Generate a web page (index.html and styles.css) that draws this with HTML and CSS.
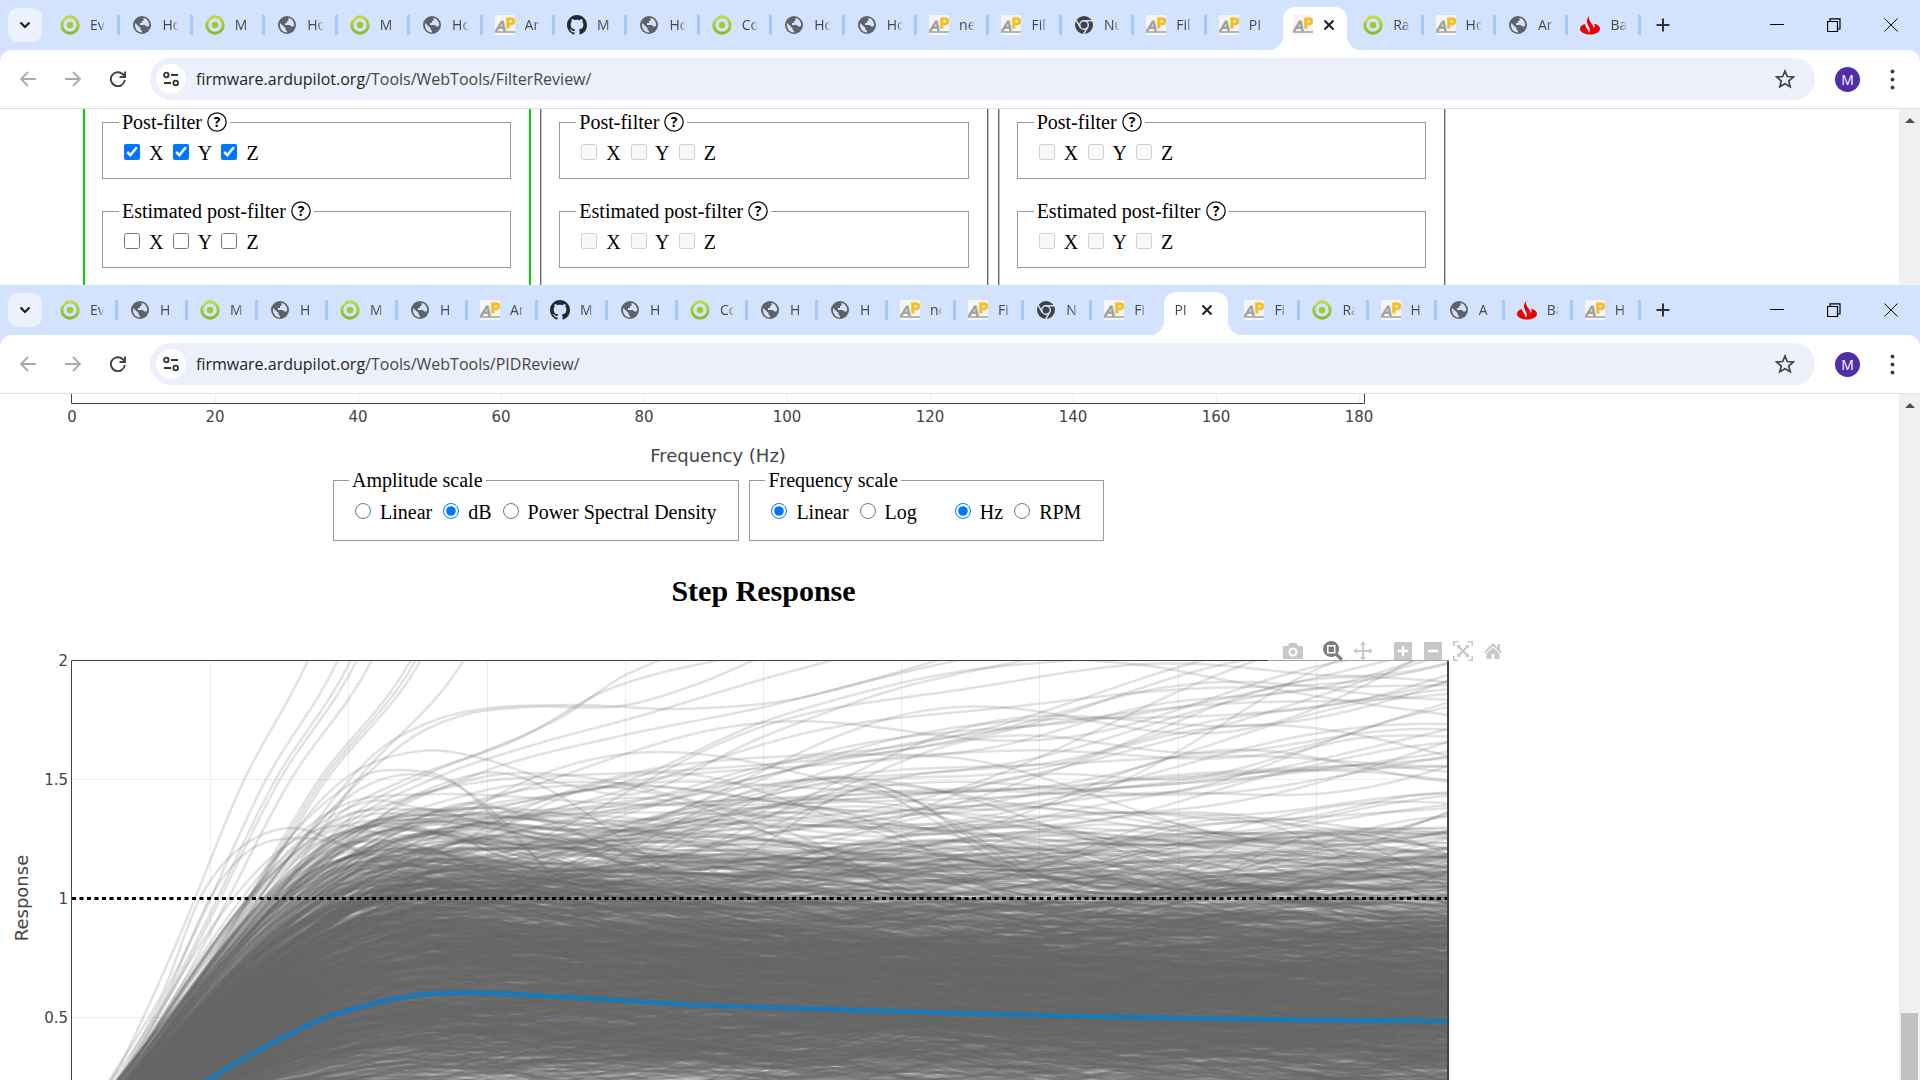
FILE: index.html
```html
<!DOCTYPE html>
<html lang="en">
<head>
  <meta charset="UTF-8" />
  <meta name="viewport" content="width=device-width, initial-scale=1.0"/>
  <title>PID Review</title>
  <link rel="stylesheet" href="styles.css">
</head>
<body>
  <!-- shared icons -->
  <svg class="sprite" aria-hidden="true">
    <defs>
      <linearGradient id="lime" x1="0" y1="0" x2="0" y2="1">
        <stop offset="0" stop-color="#c0d944"/><stop offset="1" stop-color="#86bc25"/>
      </linearGradient>
    </defs>
    <symbol id="ring" viewBox="0 0 20 20">
      <circle cx="10" cy="10" r="8.2" fill="none" stroke="url(#lime)" stroke-width="3"/>
      <circle cx="10" cy="10" r="3.2" fill="#9ecb2d"/>
      <path d="M2 6 A9 9 0 0 1 5 2.500" stroke="#d3e3fd" stroke-width="1" fill="none"/>
    </symbol>
    <symbol id="globe" viewBox="0 0 20 20">
      <circle cx="10" cy="10" r="9" fill="#5f6368"/>
      <path d="M3 8 L8.500 13 V14.500 L10 16 V17.500 C5.500 17.300 2.500 14 3 8 Z M11.500 3 C15 3.500 17 6.500 17.200 10 C16.500 12 15.500 11.500 14.500 11.500 C13.500 11.500 13.800 10 12.500 10 H8 V8 H10 V6 H11.500 Z" fill="#d3e3fd"/>
    </symbol>
    <symbol id="github" viewBox="0 0 16 16">
      <path fill="#24292f" d="M8 0C3.580 0 0 3.580 0 8c0 3.540 2.290 6.530 5.470 7.590.4.070.55-.17.55-.38 0-.19-.01-.82-.01-1.490-2.010.37-2.530-.49-2.690-.94-.09-.23-.48-.94-.82-1.130-.28-.15-.68-.52-.01-.53.63-.01 1.080.58 1.230.82.72 1.210 1.870.87 2.330.66.07-.52.28-.87.51-1.070-1.780-.2-3.640-.89-3.640-3.950 0-.87.31-1.590.82-2.150-.08-.2-.36-1.020.08-2.120 0 0 .67-.21 2.200.82.64-.18 1.320-.27 2-.27s1.360.09 2 .27c1.530-1.040 2.200-.82 2.200-.82.44 1.100.16 1.920.08 2.120.51.56.82 1.270.82 2.150 0 3.070-1.870 3.750-3.650 3.950.29.25.54.73.54 1.480 0 1.070-.01 1.930-.01 2.200 0 .21.15.46.55.38A8.010 8.010 0 0 0 16 8c0-4.420-3.580-8-8-8z"/>
    </symbol>
    <symbol id="chrome" viewBox="0 0 20 20">
      <circle cx="10" cy="10" r="9" fill="#3f4247"/>
      <circle cx="10" cy="10" r="4.300" fill="#3f4247" stroke="#d3e3fd" stroke-width="1.500"/>
      <path d="M10 5.700 H18 M6.200 12.200 L2.200 5.300 M13.700 12.200 L9.700 19" stroke="#d3e3fd" stroke-width="1.500"/>
    </symbol>
    <symbol id="flame" viewBox="0 0 20 20">
      <path fill="#ec0000" d="M10 0 C8 3 9 5 11.500 8.500 C13 10.500 13.800 11.500 13.500 13.500 C15 11.800 15 9.800 14 8.500 C18 9.500 20 11.500 20 14 C20 17 15.500 19.500 10 19.500 S0 17 0 14 C0 11.500 2 9.800 5 9 C5 11 6 12 7.500 14.500 C8.300 15.800 9 17 8.800 18 C10.500 15.500 10 13.500 8.500 11 C6.500 8 6 4 10 0 Z"/>
    </symbol>
    <symbol id="close" viewBox="0 0 12 12">
      <path d="M1.500 1.500 L10.500 10.500 M10.500 1.500 L1.500 10.500" stroke="#1f1f1f" stroke-width="2"/>
    </symbol>
  </svg>

  <div class="window" data-window="filter" data-url="/Tools/WebTools/FilterReview/">
    <div class="page filter-page">
      <main class="gyros" id="gyros"></main>
      <div class="scrollbar"><span class="arrow-up"></span></div>
    </div>
  </div>

  <div class="window grow" data-window="pid" data-url="/Tools/WebTools/PIDReview/">
    <div class="page pid-page">
      <main class="review">
        <svg class="spectrum" id="spectrum" role="img" aria-label="Frequency spectrum"></svg>
        <div class="scales">
          <fieldset class="scale">
            <legend>Amplitude scale</legend>
            <input type="radio" id="amp-linear" name="amp">
            <label for="amp-linear">Linear</label>
            <input type="radio" id="amp-db" name="amp" checked>
            <label for="amp-db">dB</label>
            <input type="radio" id="amp-psd" name="amp">
            <label for="amp-psd">Power Spectral Density</label>
          </fieldset>
          <fieldset class="scale">
            <legend>Frequency scale</legend>
            <input type="radio" id="freq-linear" name="freq" checked>
            <label for="freq-linear">Linear</label>
            <input type="radio" id="freq-log" name="freq">
            <label for="freq-log" class="group-end">Log</label>
            <input type="radio" id="unit-hz" name="unit" checked>
            <label for="unit-hz">Hz</label>
            <input type="radio" id="unit-rpm" name="unit">
            <label for="unit-rpm">RPM</label>
          </fieldset>
        </div>
        <h2>Step Response</h2>
        <div class="chart">
          <svg class="step" id="step" role="img" aria-label="Step response"></svg>
          <div class="modebar">
            <button title="Download plot as a png"><svg viewBox="0 0 20 20"><path fill-rule="evenodd" d="M1 5 H5 L6.500 2 H13.500 L15 5 H19 Q20 5 20 6 V17 Q20 18 19 18 H1 Q0 18 0 17 V6 Q0 5 1 5 Z M10 6.500 A4.500 4.500 0 1 0 10.010 6.500 Z M10 8.500 A2.500 2.500 0 1 1 9.990 8.500 Z"/></svg></button>
            <button title="Zoom" class="active gap"><svg viewBox="0 0 20 20"><path fill-rule="evenodd" d="M8 0 A8 8 0 1 0 12.500 14.700 L17.500 20 L20 17.500 L14.700 12.500 A8 8 0 0 0 8 0 Z M4 4 H12.500 V12.500 H4 Z M5.500 5.500 V11 H11 V5.500 Z"/></svg></button>
            <button title="Pan"><svg viewBox="0 0 20 20"><path d="M10 0 L13 4 H11 V9 H16 V7 L20 10 L16 13 V11 H11 V16 H13 L10 20 L7 16 H9 V11 H4 V13 L0 10 L4 7 V9 H9 V4 H7 Z"/></svg></button>
            <button title="Zoom in" class="gap"><svg viewBox="0 0 20 20"><path fill-rule="evenodd" d="M1 1 H19 V19 H1 Z M8.800 5 V8.800 H5 V11.200 H8.800 V15 H11.200 V11.200 H15 V8.800 H11.200 V5 Z"/></svg></button>
            <button title="Zoom out"><svg viewBox="0 0 20 20"><path fill-rule="evenodd" d="M1 1 H19 V19 H1 Z M5 8.800 V11.200 H15 V8.800 Z"/></svg></button>
            <button title="Autoscale"><svg viewBox="0 0 20 20"><path d="M0 0 H5 V1.500 H1.500 V5 H0 Z M15 0 H20 V5 H18.500 V1.500 H15 Z M0 15 H1.500 V18.500 H5 V20 H0 Z M18.500 15 H20 V20 H15 V18.500 H18.500 Z M4 4 H8 L6.800 5.300 L10 8.500 L13.200 5.300 L12 4 H16 V8 L14.700 6.800 L11.500 10 L14.700 13.200 L16 12 V16 H12 L13.200 14.700 L10 11.500 L6.800 14.700 L8 16 H4 V12 L5.300 13.200 L8.500 10 L5.300 6.800 L4 8 Z"/></svg></button>
            <button title="Reset axes"><svg viewBox="0 0 20 20"><path d="M10 2 L14.500 6.500 V3 H17 V9 L19 11 L17.500 12 L10 5 L2.500 12 L1 11 Z M3.500 12.500 L10 6.500 L16.500 12.500 V18 H11.500 V13 H8.500 V18 H3.500 Z"/></svg></button>
          </div>
        </div>
      </main>
      <div class="scrollbar"><span class="arrow-up"></span><span class="thumb"></span></div>
    </div>
  </div>

  <script src="script.js"></script>
</body>
</html>
```

FILE: styles.css
```css
* {
  box-sizing: border-box;
}

body {
  margin: 0;
  height: 100vh;
  display: flex;
  flex-direction: column;
  overflow: hidden;
  background: #fff;
  color: #000;
  font-family: "Liberation Serif", "Times New Roman", serif;
  font-size: 20px;
}

button {
  border: none;
  padding: 0;
  background: none;
  display: flex;
  align-items: center;
  justify-content: center;
  font-family: inherit;
}

.sprite {
  position: absolute;
  width: 0;
  height: 0;
}

.ap-mark {
  font: italic 15px "Liberation Sans", Arial, sans-serif;
  fill: #a0a0a0;
  stroke: #a0a0a0;
  stroke-width: 1px;
}

.ap-mark tspan {
  font: bold 14px "Liberation Sans", Arial, sans-serif;
  fill: #f8bd1c;
  stroke: #f8bd1c;
}

.help-mark {
  font: bold 14px "Open Sans", sans-serif;
}

.window {
  display: flex;
  flex-direction: column;
}

.grow {
  flex: 1;
  min-height: 0;
}

/* tab strip */
.tabstrip {
  display: flex;
  height: 50px;
  background: #d3e3fd;
  font-family: "Open Sans", "Segoe UI", sans-serif;
}

.tab-search {
  width: 34px;
  height: 34px;
  margin: 8px 6px 8px 8px;
  border-radius: 10px;
  background: #ebf1fd;
}

.tab-search svg {
  width: 12px;
  height: 12px;
}

.tabs {
  flex: 1;
  display: flex;
  min-width: 0;
}

.tab {
  flex: 1 1 0;
  min-width: 0;
  height: 50px;
  display: flex;
  align-items: center;
  justify-content: flex-start;
  padding: 0 14px 0 12px;
  gap: 10px;
  background: linear-gradient(#a8c7fa, #a8c7fa) right center / 3px 20px no-repeat;
}

.tab.wide {
  flex: 0 0 70px;
}

.tab.no-line {
  background: none;
}

.tab svg {
  flex: none;
  width: 20px;
  height: 20px;
}

.tab span {
  flex: 1;
  min-width: 0;
  overflow: hidden;
  white-space: nowrap;
  text-align: left;
  font-size: 14px;
  line-height: 20px;
  color: #474747;
  mask-image: linear-gradient(to right, #000 60%, transparent);
}

.tab.active {
  flex: 0 0 64px;
  position: relative;
  height: 43px;
  margin: 7px 4px 0;
  padding: 0 15px 7px 10px;
  background: #fff;
  border-radius: 12px 12px 0 0;
}

.tab.active::before,
.tab.active::after {
  content: "";
  position: absolute;
  bottom: 0;
  width: 14px;
  height: 14px;
}

.tab.active::before {
  left: -14px;
  background: radial-gradient(circle at 0 0, transparent 14px, #fff 14px);
}

.tab.active::after {
  right: -14px;
  background: radial-gradient(circle at 100% 0, transparent 14px, #fff 14px);
}

.tab .close {
  flex: none;
}

.tab .close svg {
  width: 12px;
  height: 12px;
}

.new-tab {
  width: 44px;
}

.new-tab svg {
  width: 14px;
  height: 14px;
}

.window-buttons {
  display: flex;
  margin-left: 63px;
  margin-right: 1px;
}

.window-buttons button {
  width: 57px;
}

.window-buttons svg {
  width: 14px;
  height: 14px;
}

/* address bar */
.toolbar-back {
  background: #d3e3fd;
}

.toolbar {
  display: flex;
  align-items: center;
  height: 59px;
  padding: 0 6px 0 5px;
  background: #fff;
  border-bottom: 1px solid #dfdfdf;
  border-radius: 12px 12px 0 0;
  font-family: "Open Sans", "Segoe UI", sans-serif;
}

.toolbar .nav {
  width: 45px;
  height: 45px;
}

.nav svg {
  width: 16px;
  height: 16px;
}

.omnibox {
  flex: 1;
  display: flex;
  align-items: center;
  height: 42px;
  margin-left: 10px;
  padding: 0 20px 0 6px;
  background: #ebf0fa;
  border-radius: 21px;
}

.site-info {
  width: 30px;
  height: 30px;
  margin-right: 10px;
  border-radius: 50%;
  background: #fff;
}

.site-info svg {
  width: 16px;
  height: 16px;
}

.url {
  flex: 1;
  font-size: 16px;
  line-height: 24px;
  color: #474747;
}

.url b {
  font-weight: normal;
  color: #1f1f1f;
}

.bookmark svg {
  width: 20px;
  height: 20px;
}

.avatar {
  width: 25px;
  height: 25px;
  margin-left: 20px;
  border-radius: 50%;
  background: #512da8;
  color: #fff;
  font-size: 14px;
}

.menu {
  width: 44px;
  height: 40px;
  margin-left: 10px;
}

.menu svg {
  width: 5px;
  height: 21px;
}

/* pages */
.page {
  display: flex;
  overflow: hidden;
}

.filter-page {
  height: 176px;
}

.pid-page {
  flex: 1;
  min-height: 0;
}

.scrollbar {
  width: 21px;
  background: #f0f0f0;
  display: flex;
  flex-direction: column;
  align-items: center;
  justify-content: space-between;
  padding-top: 9px;
}

.arrow-up {
  border: 5px solid transparent;
  border-top: none;
  border-bottom-color: #505050;
}

.thumb {
  width: 17px;
  height: 67px;
  background: #c1c1c1;
}

fieldset {
  margin: 0;
  min-width: 0;
  border: 1px solid #999;
}

legend {
  padding: 0 3px;
}

input {
  width: 16px;
  height: 16px;
}

.gyros {
  flex: 1;
  display: flex;
  gap: 9px;
  padding: 0 453px 0 83px;
}

.gyro {
  flex: 1;
  padding: 1px 18px 0 17px;
  border: 2px groove #c0c0c0;
  border-width: 0 2px;
}

.gyro.on {
  border-style: solid;
  border-color: #00d400;
}

.axes {
  height: 69px;
  margin-bottom: 20px;
  padding: 6px 16px 0;
}

.axes input {
  margin: 4px 4px 4px 5px;
}

.axes legend {
  display: flex;
  align-items: center;
  gap: 5px;
  height: 24px;
}

.axes legend svg {
  width: 20px;
  height: 20px;
}

.review {
  flex: 1;
  min-width: 0;
}

.spectrum {
  display: block;
  width: 100%;
  height: 75px;
}

.scales {
  display: flex;
  gap: 10px;
  padding-left: 333px;
}

.scale {
  padding: 7px 22px 16px 15px;
}

.scale input {
  margin: 4px 4px 4px 6px;
}

.scale legend {
  height: 23px;
}

.group-end {
  margin-right: 27px;
}

h2 {
  width: 1527px;
  margin: 33px 0 0;
  font-size: 30px;
  line-height: 34px;
  text-align: center;
}

.chart {
  position: relative;
}

.step {
  display: block;
  width: 100%;
  height: 480px;
}

.tick {
  font: 15px "DejaVu Sans", Verdana, sans-serif;
  fill: #444;
}

.axis-title {
  font: 18px "DejaVu Sans", Verdana, sans-serif;
  fill: #444;
}

.axis-line {
  fill: none;
  stroke: #444;
}

.grid {
  stroke: #eee;
  stroke-width: 1px;
}

.trace {
  fill: none;
  stroke: #6a6a6a;
  stroke-opacity: 0.2;
  stroke-width: 2.5px;
}

.mean {
  fill: none;
  stroke: #1f77b4;
  stroke-width: 5px;
}

.target {
  stroke: #000;
  stroke-width: 3px;
  stroke-dasharray: 4 3.5;
}

.modebar {
  position: absolute;
  top: 31px;
  left: 1268px;
  display: flex;
  padding: 2px 0 0 10px;
  background: rgba(255, 255, 255, 0.5);
}

.modebar button {
  width: 30px;
  height: 20px;
}

.modebar .gap {
  margin-left: 10px;
}

.modebar svg {
  width: 20px;
  height: 20px;
  fill: #c8c8c8;
}

.modebar .active svg {
  fill: #7c7c7c;
}
```

FILE: script.js
```javascript
// Browser chrome
const tabSets = {
  filter: {
    wide: 0,
    tabs: [
      ["ring", "Ev"], ["globe", "Ho"], ["ring", "M"], ["globe", "Ho"], ["ring", "M"], ["globe", "Ho"],
      ["ap", "Ar"], ["github", "M"], ["globe", "Ho"], ["ring", "Co"], ["globe", "Ho"], ["globe", "Ho"],
      ["ap", "ne"], ["ap", "Fil"], ["chrome", "Nu"], ["ap", "Fil"], ["ap", "PI"], ["ap", "", "active"],
      ["ring", "Ra"], ["ap", "Ho"], ["globe", "Ar"], ["flame", "Ba"]
    ]
  },
  pid: {
    wide: 12,
    tabs: [
      ["ring", "Ev"], ["globe", "H"], ["ring", "M"], ["globe", "H"], ["ring", "M"], ["globe", "H"],
      ["ap", "Ar"], ["github", "M"], ["globe", "H"], ["ring", "Co"], ["globe", "H"], ["globe", "H"],
      ["ap", "ne"], ["ap", "Fi"], ["chrome", "N"], ["ap", "Fi"], ["", "PI", "active"], ["ap", "Fi"],
      ["ring", "Ra"], ["ap", "H"], ["globe", "A"], ["flame", "Ba"], ["ap", "H"]
    ]
  }
};

const apIcon = `<svg viewBox="0 0 20 20"><rect width="20" height="20" fill="#f5f5f5"/>
  <rect y="16" width="20" height="2" fill="#b5b5b5"/><text x="1" y="16" class="ap-mark">A<tspan y="13">P</tspan></text></svg>`;
const helpIcon = `<svg viewBox="0 0 20 20"><circle cx="10" cy="10" r="9.2" fill="none" stroke="#111" stroke-width="1.3"/>
  <text x="10" y="15" text-anchor="middle" class="help-mark">?</text></svg>`;
const use = id => id === "ap" ? apIcon : `<svg><use href="#${id}"/></svg>`;

function renderTab(tab, i, set) {
  const [icon, text, active] = tab;
  const body = (icon ? use(icon) : "") + (text ? `<span>${text}</span>` : "");
  if (active) {
    return `<div class="tab active">${body}<button class="close" title="Close">${use("close")}</button></div>`;
  }
  const next = set.tabs[i + 1];
  const cls = (i < set.wide ? " wide" : "") + (next && next[2] ? " no-line" : "");
  return `<button class="tab${cls}">${body}</button>`;
}

function renderChrome(win) {
  const set = tabSets[win.dataset.window];
  win.insertAdjacentHTML("afterbegin", `
    <div class="tabstrip">
      <button class="tab-search" title="Search tabs"><svg viewBox="0 0 12 12"><path d="M1.5 3.5 L6 8 L10.5 3.5" fill="none" stroke="#1f1f1f" stroke-width="2.2"/></svg></button>
      <div class="tabs">${set.tabs.map((t, i) => renderTab(t, i, set)).join("")}</div>
      <button class="new-tab" title="New tab"><svg viewBox="0 0 14 14"><path d="M7 0.500 V13.500 M0.500 7 H13.500" stroke="#333" stroke-width="2"/></svg></button>
      <div class="window-buttons">
        <button title="Minimize"><svg viewBox="0 0 14 14"><path d="M0 6.500 H14" stroke="#000"/></svg></button>
        <button title="Restore"><svg viewBox="0 0 14 14"><path d="M0.500 3.500 H10.500 V13.500 H0.500 Z M3 3 V0.800 H13 V11 H11" fill="none" stroke="#000" stroke-width="1.2"/></svg></button>
        <button title="Close"><svg viewBox="0 0 14 14"><path d="M0.500 0.500 L13.500 13.500 M13.500 0.500 L0.500 13.500" stroke="#000"/></svg></button>
      </div>
    </div>
    <div class="toolbar-back">
      <div class="toolbar">
        <button class="nav" title="Back"><svg viewBox="0 0 16 16"><path d="M16 8 H1.500 M8 1 L1 8 L8 15" fill="none" stroke="#aaa" stroke-width="1.800"/></svg></button>
        <button class="nav" title="Forward"><svg viewBox="0 0 16 16"><path d="M0 8 H14.500 M8 1 L15 8 L8 15" fill="none" stroke="#aaa" stroke-width="1.800"/></svg></button>
        <button class="nav" title="Reload"><svg viewBox="0 0 16 16"><path d="M14.800 9 A7 7 0 1 1 12.800 3.200 L14.500 5 M15 0.500 V6 H9.500" fill="none" stroke="#444" stroke-width="2"/></svg></button>
        <div class="omnibox">
          <button class="site-info" title="Site information"><svg viewBox="0 0 16 16"><path d="M8 4 H15 M1 12 H8" stroke="#333" stroke-width="2"/><circle cx="3.300" cy="4" r="2.300" fill="none" stroke="#333" stroke-width="1.800"/><circle cx="12.700" cy="12" r="2.300" fill="none" stroke="#333" stroke-width="1.800"/></svg></button>
          <div class="url"><b>firmware.ardupilot.org</b>${win.dataset.url}</div>
          <button class="bookmark" title="Bookmark"><svg viewBox="0 0 20 20"><path d="M10 2 L12.300 7.500 L18.300 8 L13.700 12 L15.200 17.800 L10 14.700 L4.800 17.800 L6.300 12 L1.700 8 L7.700 7.500 Z" fill="none" stroke="#444" stroke-width="1.700"/></svg></button>
        </div>
        <button class="avatar" title="Profile">M</button>
        <button class="menu" title="Menu"><svg viewBox="0 0 5 21"><circle cx="2.500" cy="2.500" r="2" fill="#444"/><circle cx="2.500" cy="10.500" r="2" fill="#444"/><circle cx="2.500" cy="18.500" r="2" fill="#444"/></svg></button>
      </div>
    </div>`);
}

document.querySelectorAll(".window").forEach(renderChrome);

// Gyro options
const axisBoxes = (id, enabled, checked) => ["X", "Y", "Z"].map(axis => `
  <input type="checkbox" id="${id}${axis}"${enabled ? "" : " disabled"}${checked ? " checked" : ""}>
  <label for="${id}${axis}">${axis}</label>`).join("");

document.getElementById("gyros").innerHTML = [0, 1, 2].map(i => `
  <fieldset class="gyro${i === 0 ? " on" : ""}">
    <fieldset class="axes"><legend>Post-filter ${helpIcon}</legend>${axisBoxes(`post${i}`, i === 0, i === 0)}</fieldset>
    <fieldset class="axes"><legend>Estimated post-filter ${helpIcon}</legend>${axisBoxes(`est${i}`, i === 0, false)}</fieldset>
  </fieldset>`).join("");

// Bottom of the spectrum plot
let spectrum = "";
for (let i = 0; i < 10; i++) {
  const x = 72 + i * 143;
  if (i > 0) spectrum += `<path class="grid" d="M${x + 0.5} 0 V9"/>`;
  spectrum += `<text class="tick" x="${x}" y="28" text-anchor="middle">${i * 20}</text>`;
}
spectrum += `<path class="axis-line" d="M71.5 0 V9.500 H1364.500 V0"/>
  <text class="axis-title" x="718" y="68" text-anchor="middle">Frequency (Hz)</text>`;
document.getElementById("spectrum").innerHTML = spectrum;

// Step response plot
const left = 72, right = 1448, top0 = 52, zero = 528, unit = 238;
const yPos = v => zero - v * unit;

let seed = 7;
function rnd() {
  seed = (seed * 1664525 + 1013904223) % 4294967296;
  return seed / 4294967296;
}
const gauss = () => rnd() + rnd() + rnd() + rnd() - 2;

// smooth path through a list of points
function spline(pts) {
  let d = `M${pts[0][0]} ${pts[0][1]}`;
  for (let i = 0; i < pts.length - 1; i++) {
    const a = pts[Math.max(i - 1, 0)], b = pts[i], c = pts[i + 1], e = pts[Math.min(i + 2, pts.length - 1)];
    const k = (c[0] - b[0]) / 3;
    const m1 = (c[1] - a[1]) / (c[0] - a[0]), m2 = (e[1] - b[1]) / (e[0] - b[0]);
    d += `C${(b[0] + k).toFixed(1)} ${(b[1] + m1 * k).toFixed(1)} ${(c[0] - k).toFixed(1)} ${(c[1] - m2 * k).toFixed(1)} ${c[0].toFixed(1)} ${c[1].toFixed(1)}`;
  }
  return d;
}

const meanPts = [
  [72, 528], [120, 513], [160, 500], [206, 473], [252, 446], [286, 428], [325, 410], [356, 400], [393, 391],
  [431, 386], [477, 385], [523, 387], [582, 390], [630, 393], [693, 397], [760, 399], [847, 402],
  [949, 405], [1070, 408], [1177, 410], [1308, 412], [1448, 413]
];

function rise(x, width) {
  const u = Math.max(0, (x - 72) / width);
  return u >= 1 ? 1 : Math.pow(Math.sin(u * Math.PI / 2), 1.25);
}

function trace(gain, end, width, wobble) {
  const p1 = rnd() * 6.28, p2 = rnd() * 6.28, p3 = rnd() * 6.28;
  const f1 = 90 + rnd() * 60, f2 = 50 + rnd() * 30;
  const a1 = wobble * gauss(), a2 = wobble * 0.35 * gauss();
  const pts = [];
  for (let x = 72; x <= 1480; x += 28) {
    const r = rise(x, width);
    const t = Math.max(0, (x - 72 - width) / (1376 - width));
    const grow = Math.min(1, Math.max(0, (x - 150) / 350));
    const v = r * (gain + (end - gain) * Math.pow(t, 0.8))
      + grow * (a1 * Math.sin(x / f1 + p1) + a2 * Math.sin(x / f2 + p2) + a2 * Math.sin(x / 190 + p3));
    pts.push([x, yPos(v)]);
  }
  return spline(pts);
}

const paths = [];
// bulk of the windows
for (let i = 0; i < 1350; i++) {
  const gain = Math.abs(0.66 + 0.48 * gauss());
  if (gain > 1.42) continue;
  paths.push(trace(gain, 0.22 + gain * 0.5 + 0.36 * gauss(), 300 + 120 * rnd(), 0.14));
}
// overshooting windows that settle just above the target
for (let i = 0; i < 80; i++) {
  paths.push(trace(0.95 + rnd() * 0.42, 0.95 + rnd() * 0.32, 290 + 130 * rnd(), 0.16));
}
// windows that keep on climbing
for (let i = 0; i < 52; i++) {
  const gain = 0.9 + rnd() * 0.5;
  paths.push(trace(gain, 1.2 + rnd() * 0.95, 290 + 130 * rnd(), 0.16));
}
// strong outliers, straight out of the top
for (const x of [309, 339, 352, 358, 373, 412, 417, 422, 465]) {
  const w = x - 72;
  paths.push(spline([[72, 528], [72 + w * 0.2, 458], [72 + w * 0.45, 330], [72 + w * 0.72, 175], [x, 50], [x + 50, -90]]));
}
[
  [[72, 528], [180, 400], [300, 235], [370, 150], [430, 114], [490, 100], [580, 97], [680, 101], [800, 90], [980, 40]],
  [[72, 528], [190, 380], [310, 225], [400, 138], [460, 108], [530, 99], [620, 98], [700, 75], [780, 40]],
  [[72, 528], [180, 400], [290, 230], [350, 167], [420, 143], [480, 150], [560, 175], [640, 185], [760, 130], [900, 80], [1060, 45]],
  [[72, 528], [200, 370], [330, 215], [400, 174], [480, 145], [560, 110], [620, 70], [670, 48]],
  [[72, 528], [210, 360], [350, 210], [430, 165], [520, 130], [600, 85], [660, 65], [740, 48]],
  [[72, 528], [200, 375], [340, 222], [440, 168], [540, 135], [640, 108], [760, 72], [860, 45]],
  [[72, 528], [160, 390], [200, 290], [240, 240], [290, 220], [340, 235], [400, 260], [500, 300], [640, 330], [900, 300], [1448, 310]],
  [[72, 528], [160, 400], [210, 290], [250, 242], [300, 230], [350, 240], [420, 280], [560, 320], [800, 300], [1448, 290]],
  [[72, 528], [190, 380], [290, 230], [360, 170], [400, 162], [450, 172], [500, 215], [560, 270], [640, 300], [760, 265], [900, 240], [1448, 200]],
  [[72, 528], [190, 390], [300, 235], [370, 176], [440, 170], [500, 210], [560, 275], [620, 298], [740, 250], [860, 180], [920, 205], [1040, 270], [1200, 250], [1448, 230]],
  [[72, 528], [200, 375], [340, 240], [480, 215], [620, 225], [760, 190], [840, 173], [900, 185], [960, 220], [1040, 265], [1100, 295], [1200, 290], [1448, 250]],
  [[72, 528], [200, 375], [340, 232], [480, 210], [620, 215], [760, 182], [840, 169], [910, 190], [970, 230], [1060, 280], [1200, 300], [1448, 270]],
  [[1060, 50], [1150, 58], [1240, 75], [1340, 92], [1448, 107]],
  [[72, 528], [200, 380], [340, 235], [480, 165], [620, 128], [760, 100], [860, 75], [960, 52], [1040, 40]],
  [[72, 528], [200, 380], [340, 240], [480, 198], [620, 175], [760, 115], [880, 80], [970, 62], [1100, 50]]
].forEach(p => paths.push(spline(p)));

let step = `<defs><clipPath id="plot"><rect x="${left}" y="${top0}" width="${right - left}" height="440"/></clipPath></defs>`;
for (let i = 1; i < 10; i++) {
  step += `<path class="grid" d="M${Math.round(72 + i * 138.2) + 0.5} ${top0} V480"/>`;
}
step += `<path class="grid" d="M72 171.500 H1448 M72 409.500 H1448"/>`;
step += `<g clip-path="url(#plot)">${paths.map(d => `<path class="trace" d="${d}"/>`).join("")}
  <path class="mean" d="${spline(meanPts)}"/>
  <path class="target" d="M72 290.500 H1448"/></g>
  <path class="axis-line" d="M71.500 480 V52.500 H1448"/>
  <path class="axis-line" stroke-width="2" d="M1448 52 V480"/>`;
for (const v of [0.5, 1, 1.5, 2]) {
  step += `<text class="tick" x="68" y="${yPos(v) + 6}" text-anchor="end">${v}</text>`;
}
step += `<text class="axis-title" transform="translate(28 290) rotate(-90)" text-anchor="middle">Response</text>`;
document.getElementById("step").innerHTML = step;
```
